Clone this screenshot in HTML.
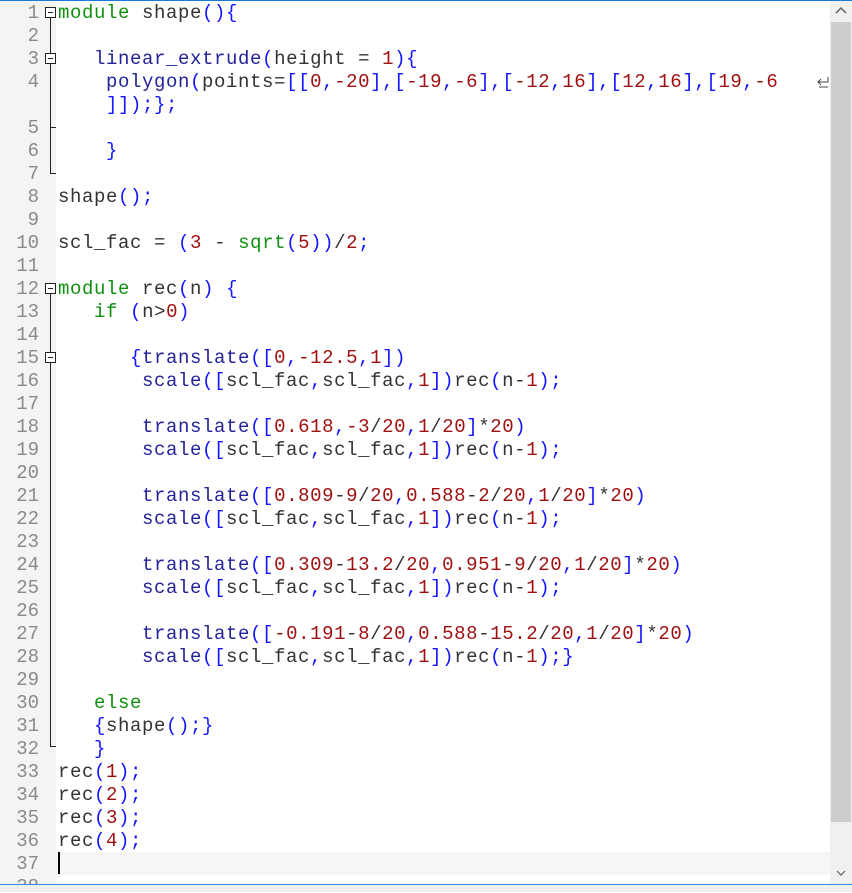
<!DOCTYPE html>
<html><head><meta charset="utf-8"><style>
body{margin:0;width:852px;height:892px;overflow:hidden;background:#fff;position:relative;font-family:"Liberation Mono","Courier New",monospace}
#top{position:absolute;left:0;top:0;width:852px;height:1px;background:#1a7ad6}
#gut{position:absolute;left:0;top:1px;width:56px;height:883px;background:#f4f4f4}
#bot{position:absolute;left:0;top:884px;width:852px;height:1px;background:#3b8bd9}
#bot2{position:absolute;left:0;top:885px;width:852px;height:7px;background:#f0f0f0}
.n{position:absolute;left:0;width:39px;text-align:right;font-size:19px;color:#8a8a8a;line-height:23px;height:23px}
.l{position:absolute;left:58px;font-size:19px;letter-spacing:0.6px;line-height:23px;height:23px;white-space:pre;color:#333}
.k{color:#109010}.f{color:#23239a}.p{color:#1515ff}.d{color:#a01010}
.fb{position:absolute;left:45px;width:9px;height:9px;border:1px solid #222;background:#fff}
.fb:after{content:"";position:absolute;left:2px;top:4px;width:5px;height:1px;background:#222}
.vl{position:absolute;left:50px;width:1px;background:#222}
.hl{position:absolute;left:50px;width:6px;height:1px;background:#222}
#sb{position:absolute;left:830px;top:1px;width:22px;height:883px;background:#f0f0f0}
#th{position:absolute;left:831px;top:22px;width:20px;height:800px;background:#cdcdcd}
#cur{position:absolute;left:56px;top:852px;width:774px;height:23px;background:#f6f6f6}
.t{position:absolute;left:0;top:1px;width:852px;height:892px}
</style></head><body>
<div id="top"></div><div id="gut"></div><div id="cur"></div>
<div style="position:absolute;left:58px;top:852px;width:2px;height:22px;background:#000"></div>
<div id="sb"></div><div id="th"></div>
<svg style="position:absolute;left:834px;top:6px" width="14" height="10"><path d="M2 7 L7 2 L12 7" fill="none" stroke="#606060" stroke-width="1.5"/></svg>
<svg style="position:absolute;left:834px;top:868px" width="14" height="10"><path d="M3 3 L7 7 L11 3" fill="none" stroke="#606060" stroke-width="1.2"/></svg>
<svg style="position:absolute;left:816px;top:76px" width="14" height="14"><path d="M12 1 V6 H2 M5 3 L2 6 L5 9 M2 6 L12 6 M3 11 H12" fill="none" stroke="#444" stroke-width="1"/></svg>
<div id="bot"></div><div id="bot2"></div>

<div class="vl" style="top:17px;height:157px"></div><div class="hl" style="top:173px"></div>
<div class="hl" style="top:127px"></div>
<div class="vl" style="top:293px;height:454px"></div><div class="hl" style="top:746px"></div>
<div class="fb" style="top:7px"></div><div class="fb" style="top:53px"></div>
<div class="fb" style="top:283px"></div><div class="fb" style="top:352px"></div>
<div class="t">
<div class="n" style="top:1px">1</div><div class="l" style="top:1px"><span class="k">module</span> shape<span class="p">(){</span></div>
<div class="n" style="top:24px">2</div>
<div class="n" style="top:47px">3</div><div class="l" style="top:47px">   <span class="f">linear_extrude</span><span class="p">(</span>height = <span class="d">1</span><span class="p">){</span></div>
<div class="n" style="top:70px">4</div><div class="l" style="top:70px">    <span class="f">polygon</span><span class="p">(</span>points=<span class="p">[[</span><span class="d">0</span><span class="p">,</span><span class="d">-20</span><span class="p">],[</span><span class="d">-19</span><span class="p">,</span><span class="d">-6</span><span class="p">],[</span><span class="d">-12</span><span class="p">,</span><span class="d">16</span><span class="p">],[</span><span class="d">12</span><span class="p">,</span><span class="d">16</span><span class="p">],[</span><span class="d">19</span><span class="p">,</span><span class="d">-6</span></div>
<div class="l" style="top:93px">    <span class="p">]]);};</span></div>
<div class="n" style="top:116px">5</div>
<div class="n" style="top:139px">6</div><div class="l" style="top:139px">    <span class="p">}</span></div>
<div class="n" style="top:162px">7</div>
<div class="n" style="top:185px">8</div><div class="l" style="top:185px">shape<span class="p">();</span></div>
<div class="n" style="top:208px">9</div>
<div class="n" style="top:231px">10</div><div class="l" style="top:231px">scl_fac = <span class="p">(</span><span class="d">3</span> - <span class="k">sqrt</span><span class="p">(</span><span class="d">5</span><span class="p">))</span>/<span class="d">2</span><span class="p">;</span></div>
<div class="n" style="top:254px">11</div>
<div class="n" style="top:277px">12</div><div class="l" style="top:277px"><span class="k">module</span> rec<span class="p">(</span>n<span class="p">)</span> <span class="p">{</span></div>
<div class="n" style="top:300px">13</div><div class="l" style="top:300px">   <span class="k">if</span> <span class="p">(</span>n&gt;<span class="d">0</span><span class="p">)</span></div>
<div class="n" style="top:323px">14</div>
<div class="n" style="top:346px">15</div><div class="l" style="top:346px">      <span class="p">{</span><span class="f">translate</span><span class="p">([</span><span class="d">0</span><span class="p">,</span><span class="d">-12.5</span><span class="p">,</span><span class="d">1</span><span class="p">])</span></div>
<div class="n" style="top:369px">16</div><div class="l" style="top:369px">       <span class="f">scale</span><span class="p">([</span>scl_fac<span class="p">,</span>scl_fac<span class="p">,</span><span class="d">1</span><span class="p">])</span>rec<span class="p">(</span>n-<span class="d">1</span><span class="p">);</span></div>
<div class="n" style="top:392px">17</div>
<div class="n" style="top:415px">18</div><div class="l" style="top:415px">       <span class="f">translate</span><span class="p">([</span><span class="d">0.618</span><span class="p">,</span><span class="d">-3</span>/<span class="d">20</span><span class="p">,</span><span class="d">1</span>/<span class="d">20</span><span class="p">]</span>*<span class="d">20</span><span class="p">)</span></div>
<div class="n" style="top:438px">19</div><div class="l" style="top:438px">       <span class="f">scale</span><span class="p">([</span>scl_fac<span class="p">,</span>scl_fac<span class="p">,</span><span class="d">1</span><span class="p">])</span>rec<span class="p">(</span>n-<span class="d">1</span><span class="p">);</span></div>
<div class="n" style="top:461px">20</div>
<div class="n" style="top:484px">21</div><div class="l" style="top:484px">       <span class="f">translate</span><span class="p">([</span><span class="d">0.809</span>-<span class="d">9</span>/<span class="d">20</span><span class="p">,</span><span class="d">0.588</span>-<span class="d">2</span>/<span class="d">20</span><span class="p">,</span><span class="d">1</span>/<span class="d">20</span><span class="p">]</span>*<span class="d">20</span><span class="p">)</span></div>
<div class="n" style="top:507px">22</div><div class="l" style="top:507px">       <span class="f">scale</span><span class="p">([</span>scl_fac<span class="p">,</span>scl_fac<span class="p">,</span><span class="d">1</span><span class="p">])</span>rec<span class="p">(</span>n-<span class="d">1</span><span class="p">);</span></div>
<div class="n" style="top:530px">23</div>
<div class="n" style="top:553px">24</div><div class="l" style="top:553px">       <span class="f">translate</span><span class="p">([</span><span class="d">0.309</span>-<span class="d">13.2</span>/<span class="d">20</span><span class="p">,</span><span class="d">0.951</span>-<span class="d">9</span>/<span class="d">20</span><span class="p">,</span><span class="d">1</span>/<span class="d">20</span><span class="p">]</span>*<span class="d">20</span><span class="p">)</span></div>
<div class="n" style="top:576px">25</div><div class="l" style="top:576px">       <span class="f">scale</span><span class="p">([</span>scl_fac<span class="p">,</span>scl_fac<span class="p">,</span><span class="d">1</span><span class="p">])</span>rec<span class="p">(</span>n-<span class="d">1</span><span class="p">);</span></div>
<div class="n" style="top:599px">26</div>
<div class="n" style="top:622px">27</div><div class="l" style="top:622px">       <span class="f">translate</span><span class="p">([</span><span class="d">-0.191</span>-<span class="d">8</span>/<span class="d">20</span><span class="p">,</span><span class="d">0.588</span>-<span class="d">15.2</span>/<span class="d">20</span><span class="p">,</span><span class="d">1</span>/<span class="d">20</span><span class="p">]</span>*<span class="d">20</span><span class="p">)</span></div>
<div class="n" style="top:645px">28</div><div class="l" style="top:645px">       <span class="f">scale</span><span class="p">([</span>scl_fac<span class="p">,</span>scl_fac<span class="p">,</span><span class="d">1</span><span class="p">])</span>rec<span class="p">(</span>n-<span class="d">1</span><span class="p">);}</span></div>
<div class="n" style="top:668px">29</div>
<div class="n" style="top:691px">30</div><div class="l" style="top:691px">   <span class="k">else</span></div>
<div class="n" style="top:714px">31</div><div class="l" style="top:714px">   <span class="p">{</span>shape<span class="p">();}</span></div>
<div class="n" style="top:737px">32</div><div class="l" style="top:737px">   <span class="p">}</span></div>
<div class="n" style="top:760px">33</div><div class="l" style="top:760px">rec<span class="p">(</span><span class="d">1</span><span class="p">);</span></div>
<div class="n" style="top:783px">34</div><div class="l" style="top:783px">rec<span class="p">(</span><span class="d">2</span><span class="p">);</span></div>
<div class="n" style="top:806px">35</div><div class="l" style="top:806px">rec<span class="p">(</span><span class="d">3</span><span class="p">);</span></div>
<div class="n" style="top:829px">36</div><div class="l" style="top:829px">rec<span class="p">(</span><span class="d">4</span><span class="p">);</span></div>
<div class="n" style="top:852px">37</div>
<div class="n" style="top:875px;height:8px;overflow:hidden">38</div>
</div>
</body></html>
